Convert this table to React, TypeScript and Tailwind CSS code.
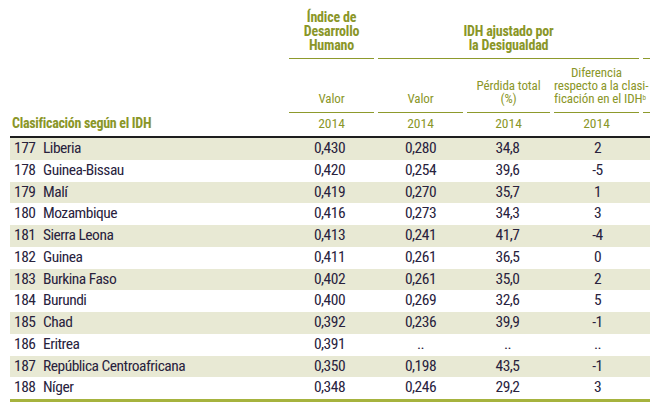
const rows = [
  ["177", "Liberia", "0,430", "0,280", "34,8", "2"],
  ["178", "Guinea-Bissau", "0,420", "0,254", "39,6", "-5"],
  ["179", "Malí", "0,419", "0,270", "35,7", "1"],
  ["180", "Mozambique", "0,416", "0,273", "34,3", "3"],
  ["181", "Sierra Leona", "0,413", "0,241", "41,7", "-4"],
  ["182", "Guinea", "0,411", "0,261", "36,5", "0"],
  ["183", "Burkina Faso", "0,402", "0,261", "35,0", "2"],
  ["184", "Burundi", "0,400", "0,269", "32,6", "5"],
  ["185", "Chad", "0,392", "0,236", "39,9", "-1"],
  ["186", "Eritrea", "0,391", "..", "..", ".."],
  ["187", "República Centroafricana", "0,350", "0,198", "43,5", "-1"],
  ["188", "Níger", "0,348", "0,246", "29,2", "3"],
];

function Cell({ className, children }: { className: string; children?: React.ReactNode }) {
  return <div className={`flex shrink-0 justify-center ${className}`}>{children}</div>;
}

export default function App() {
  return (
    <div className="w-[650px] h-[404px] overflow-hidden bg-white pl-[10px] font-[Roboto,sans-serif] font-stretch-condensed">
      <div className="w-[640px]">
        {/* header row 1 */}
        <div className="flex h-[59px] items-end text-[14px] font-bold leading-[14px] tracking-[-0.2px] text-[#8a9628]">
          <div className="w-[277px] shrink-0" />
          <div className="w-[89px] shrink-0 px-[2px]">
            <div className="border-b border-[#8d9a2c] pb-[6px] text-center">
              Índice de<br />Desarrollo<br />Humano
            </div>
          </div>
          <div className="w-[265px] shrink-0 px-[2px]">
            <div className="border-b border-[#8d9a2c] pb-[6px] text-center">
              IDH ajustado por<br />la Desigualdad
            </div>
          </div>
          <div className="flex-1 pl-[2px]">
            <div className="border-b border-[#8d9a2c]" />
          </div>
        </div>

        {/* header row 2 */}
        <div className="flex h-[54px] items-stretch text-[13px] leading-[13px] tracking-[-0.1px] text-[#8a9628]">
          <div className="w-[277px] shrink-0" />
          {["w-[89px]", "w-[89px]", "w-[87px]", "w-[89px]"].map((w, i) => (
            <div key={i} className={`${w} shrink-0 px-[2px]`}>
              <div className="flex h-full flex-col justify-end border-b border-[#8d9a2c] pb-[7px] text-center">
                {i < 2 && <span>Valor</span>}
                {i === 2 && (
                  <span>
                    Pérdida total<br />(%)
                  </span>
                )}
                {i === 3 && (
                  <span className="whitespace-nowrap">
                    Diferencia<br />respecto a la clasi-<br />ficación en el IDH
                    <sup className="text-[7px] leading-none">b</sup>
                  </span>
                )}
              </div>
            </div>
          ))}
          <div className="flex-1 pl-[2px]">
            <div className="h-full border-b border-[#8d9a2c]" />
          </div>
        </div>

        {/* header row 3 */}
        <div className="flex h-[25px] items-end border-b-2 border-[#1e1e1e] pb-[6px] text-[13.5px] leading-[14px] text-[#8a9628]">
          <div className="w-[277px] shrink-0 pl-[2px] text-[14px] font-bold tracking-[-0.3px]">Clasificación según el IDH</div>
          <Cell className="w-[89px]">2014</Cell>
          <Cell className="w-[89px]">2014</Cell>
          <Cell className="w-[87px]">2014</Cell>
          <Cell className="w-[89px]">2014</Cell>
        </div>

        {/* data rows */}
        {rows.map((r, i) => (
          <div
            key={r[0]}
            className={`flex h-[21.75px] items-center text-[15.5px] leading-[21.75px] tracking-[-0.5px] text-[#28223d] ${
              i % 2 === 0 ? "bg-[#e8e9d4]" : "bg-white"
            }`}
          >
            <div className="flex w-[277px] shrink-0 pl-[4px]">
              <span className="w-[29px] shrink-0">{r[0]}</span>
              <span>{r[1]}</span>
            </div>
            <Cell className="w-[89px] pr-[4px]">{r[2]}</Cell>
            <Cell className="w-[89px]">{r[3]}</Cell>
            <Cell className="w-[87px] pr-[2px]">{r[4]}</Cell>
            <Cell className="w-[89px] pl-[2px]">{r[5]}</Cell>
          </div>
        ))}
        <div className="h-[3px] bg-[#a6b33e]" />
      </div>
    </div>
  );
}
